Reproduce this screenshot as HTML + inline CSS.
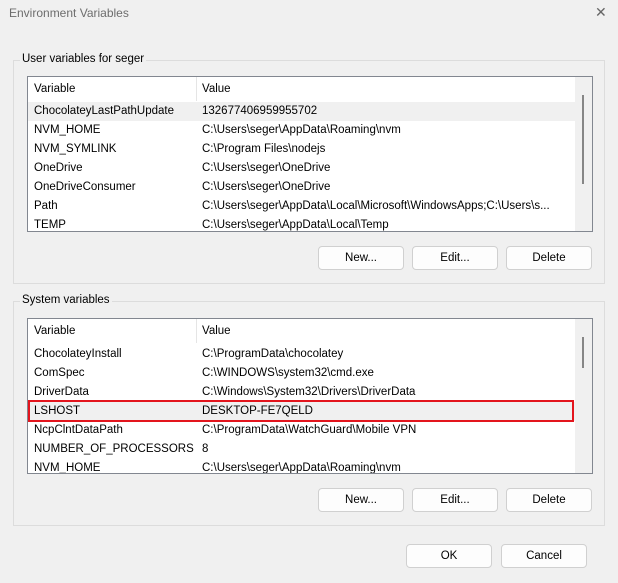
<!DOCTYPE html>
<html><head><style>
*{margin:0;padding:0;box-sizing:border-box}
body{width:618px;height:583px;background:#f0f0f0;font-family:"Liberation Sans",sans-serif;font-size:11.5px;color:#000;position:relative;overflow:hidden}
.a{position:absolute}
.title{left:9px;top:6px;color:#6d6d6d;font-size:12px}
.x{left:595px;top:4px;font-size:14px;color:#666}
.grp{border:1px solid #dcdcdc;}
.lbl{background:#f0f0f0;padding:0 2px;font-size:11.5px}
.list{background:#fff;border:1px solid #828790;overflow:hidden}
.row{position:absolute;left:0;width:547px;height:19px;line-height:19px;white-space:nowrap}
.row span{position:absolute}
.c1{left:6px}.c2{left:174px}
.hdr{position:absolute;left:0;top:0;width:547px;height:24px;line-height:24px}
.sep{position:absolute;left:168px;top:0;width:1px;height:24px;background:#e5e5e5}
.sb{position:absolute;right:0;top:0;width:17px;height:100%;background:#f0f0f0}
.th{position:absolute;left:7px;width:2px;background:#868686}
.btn{position:absolute;height:24px;width:86px;background:#fdfdfd;border:1px solid #d0d0d0;border-radius:4px;text-align:center;line-height:22px;font-size:11.5px}
</style></head><body>
<div class="a title">Environment Variables</div>
<div class="a x">✕</div>

<div class="a grp" style="left:13px;top:60px;width:592px;height:224px"></div>
<div class="a lbl" style="left:20px;top:53px">User variables for seger</div>
<div class="a list" style="left:27px;top:76px;width:566px;height:156px">
 <div class="hdr"><span class="a c1" style="left:6px">Variable</span><span class="a" style="left:174px">Value</span><div class="sep"></div></div>
 <div class="row" style="top:25px;background:#f0f0f0"><span class="c1">ChocolateyLastPathUpdate</span><span class="c2">132677406959955702</span></div>
 <div class="row" style="top:44px"><span class="c1">NVM_HOME</span><span class="c2">C:\Users\seger\AppData\Roaming\nvm</span></div>
 <div class="row" style="top:63px"><span class="c1">NVM_SYMLINK</span><span class="c2">C:\Program Files\nodejs</span></div>
 <div class="row" style="top:82px"><span class="c1">OneDrive</span><span class="c2">C:\Users\seger\OneDrive</span></div>
 <div class="row" style="top:101px"><span class="c1">OneDriveConsumer</span><span class="c2">C:\Users\seger\OneDrive</span></div>
 <div class="row" style="top:120px"><span class="c1">Path</span><span class="c2">C:\Users\seger\AppData\Local\Microsoft\WindowsApps;C:\Users\s...</span></div>
 <div class="row" style="top:139px"><span class="c1">TEMP</span><span class="c2">C:\Users\seger\AppData\Local\Temp</span></div>
 <div class="sb"><div class="th" style="top:18px;height:89px"></div></div>
</div>
<div class="btn" style="left:318px;top:246px">New...</div>
<div class="btn" style="left:412px;top:246px">Edit...</div>
<div class="btn" style="left:506px;top:246px">Delete</div>

<div class="a grp" style="left:13px;top:301px;width:592px;height:225px"></div>
<div class="a lbl" style="left:20px;top:294px">System variables</div>
<div class="a list" style="left:27px;top:318px;width:566px;height:156px">
 <div class="hdr"><span class="a" style="left:6px">Variable</span><span class="a" style="left:174px">Value</span><div class="sep"></div></div>
 <div class="row" style="top:26px"><span class="c1">ChocolateyInstall</span><span class="c2">C:\ProgramData\chocolatey</span></div>
 <div class="row" style="top:45px"><span class="c1">ComSpec</span><span class="c2">C:\WINDOWS\system32\cmd.exe</span></div>
 <div class="row" style="top:64px"><span class="c1">DriverData</span><span class="c2">C:\Windows\System32\Drivers\DriverData</span></div>
 <div class="row" style="top:83px;background:#f0f0f0"><span class="c1">LSHOST</span><span class="c2">DESKTOP-FE7QELD</span></div>
 <div class="row" style="top:102px"><span class="c1">NcpClntDataPath</span><span class="c2">C:\ProgramData\WatchGuard\Mobile VPN</span></div>
 <div class="row" style="top:121px"><span class="c1">NUMBER_OF_PROCESSORS</span><span class="c2">8</span></div>
 <div class="row" style="top:140px"><span class="c1">NVM_HOME</span><span class="c2">C:\Users\seger\AppData\Roaming\nvm</span></div>
 <div class="sb"><div class="th" style="top:18px;height:31px"></div></div>
</div>
<div class="a" style="left:28px;top:400px;width:546px;height:22px;border:2px solid #e3151d"></div>
<div class="btn" style="left:318px;top:488px">New...</div>
<div class="btn" style="left:412px;top:488px">Edit...</div>
<div class="btn" style="left:506px;top:488px">Delete</div>

<div class="btn" style="left:406px;top:544px">OK</div>
<div class="btn" style="left:501px;top:544px">Cancel</div>
</body></html>
